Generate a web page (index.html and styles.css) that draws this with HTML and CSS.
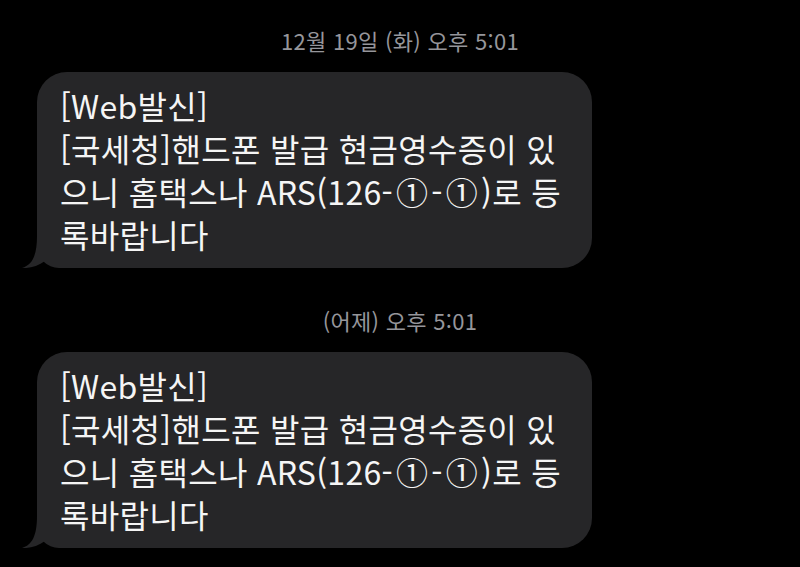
FILE: index.html
```html
<!DOCTYPE html>
<html lang="ko">
<head>
<meta charset="utf-8">
<link rel="stylesheet" href="styles.css">
</head>
<body>
<div class="thread">
  <div class="stamp">12월 19일 (화) 오후 5:01</div>
  <div class="bubble">
    <div class="text">[Web발신]<br>[국세청]핸드폰 발급 현금영수증이 있<br>으니 홈택스나 ARS(126-<span class="circ">①</span>-<span class="circ">①</span>)로 등<br>록바랍니다</div>
    <svg class="tail" width="40" height="40" viewBox="0 0 40 40"><path d="M16,8 C16,28 11,37 1,40 C9,40.5 17,38 24,33 L24,8 Z" fill="#262628"/></svg>
  </div>
  <div class="stamp stamp-gap">(어제) 오후 5:01</div>
  <div class="bubble">
    <div class="text">[Web발신]<br>[국세청]핸드폰 발급 현금영수증이 있<br>으니 홈택스나 ARS(126-<span class="circ">①</span>-<span class="circ">①</span>)로 등<br>록바랍니다</div>
    <svg class="tail" width="40" height="40" viewBox="0 0 40 40"><path d="M16,8 C16,28 11,37 1,40 C9,40.5 17,38 24,33 L24,8 Z" fill="#262628"/></svg>
  </div>
</div>
</body>
</html>
```
FILE: styles.css
```css
html, body {
  margin: 0;
  padding: 0;
  background: #000;
}
body {
  width: 800px;
  height: 567px;
  overflow: hidden;
  font-family: "Noto Sans CJK KR", "Noto Sans", sans-serif;
}
.thread {
  display: flex;
  flex-direction: column;
  padding-top: 26px;
}
.stamp {
  height: 28px;
  line-height: 28px;
  text-align: center;
  color: #96969b;
  font-size: 22px;
  letter-spacing: 0.3px;
}
.stamp-gap {
  margin-top: 38px;
}
.bubble {
  position: relative;
  margin-top: 18px;
  margin-left: 37px;
  width: 555px;
  box-sizing: border-box;
  padding: 12px 0 12px 23px;
  background: #262628;
  border-radius: 30px 30px 30px 22px;
}
.text {
  color: #f5f5f5;
  font-size: 32px;
  line-height: 43px;
  letter-spacing: 0.3px;
  white-space: nowrap;
}
.circ {
  margin: 0 3px;
}
.tail {
  position: absolute;
  left: -16px;
  bottom: 0;
  display: block;
}
```
